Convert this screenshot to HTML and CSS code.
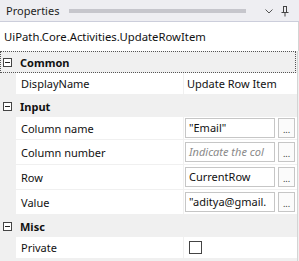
FILE: index.html
```html
<!DOCTYPE html>
<html lang="en">
<head>
  <meta charset="UTF-8">
  <title>Properties</title>
  <link rel="stylesheet" href="styles.css">
</head>
<body>
  <div class="panel">
    <header class="titlebar">
      <span class="title">Properties</span>
      <span class="grip"></span>
      <svg class="tb-icon" width="10" height="8" viewBox="0 0 10 8">
        <path d="M1.5 2.5 L5 6 L8.5 2.5" fill="none" stroke="#555" stroke-width="1"/>
      </svg>
      <svg class="tb-icon" width="10" height="12" viewBox="0 0 10 12">
        <path d="M3 1.5 H7 M3.5 1.5 V7 M6.5 1.5 V7 M1.5 7.5 H8.5 M5 7.5 V11.5" fill="none" stroke="#444" stroke-width="1"/>
      </svg>
    </header>

    <div class="objname">UiPath.Core.Activities.UpdateRowItem</div>

    <div class="grid">
      <div class="cat focus"><span class="toggle"></span>Common</div>
      <div class="prop">
        <div class="name">DisplayName</div>
        <div class="value">Update Row Item</div>
      </div>

      <div class="cat"><span class="toggle"></span>Input</div>
      <div class="prop tall first">
        <div class="name">Column name</div>
        <div class="value"><span class="box">"Email"</span><span class="more">...</span></div>
      </div>
      <div class="prop tall">
        <div class="name">Column number</div>
        <div class="value"><span class="box hint">Indicate the col</span><span class="more">...</span></div>
      </div>
      <div class="prop tall">
        <div class="name">Row</div>
        <div class="value"><span class="box">CurrentRow</span><span class="more">...</span></div>
      </div>
      <div class="prop tall">
        <div class="name">Value</div>
        <div class="value"><span class="box">"aditya@gmail.</span><span class="more">...</span></div>
      </div>

      <div class="cat"><span class="toggle"></span>Misc</div>
      <div class="prop">
        <div class="name">Private</div>
        <div class="value"><span class="check"></span></div>
      </div>
    </div>
  </div>
</body>
</html>
```

FILE: styles.css
```css
* {
  margin: 0;
  padding: 0;
  box-sizing: border-box;
}

body {
  font-family: 'Noto Sans', 'Open Sans', Arial, sans-serif;
  font-size: 11px;
  color: #111;
  background-color: #f0f0f0;
  width: 299px;
  height: 261px;
  overflow: hidden;
}

.panel {
  display: flex;
  flex-direction: column;
  height: 261px;
}

/* Title bar */
.titlebar {
  display: flex;
  align-items: center;
  height: 22px;
  padding: 0 9px 0 6px;
  gap: 6px;
  background-color: #eeeef2;
  border-bottom: 1px solid #cccedb;
}

.titlebar .title {
  color: #1e1e1e;
}

.grip {
  flex: 1;
  height: 4px;
  margin: 0 12px 0 4px;
  background-image: radial-gradient(circle, #b0b0b8 0.6px, transparent 0.9px);
  background-size: 2px 2px;
}

.tb-icon {
  display: block;
}

/* Selected object name */
.objname {
  height: 29px;
  line-height: 29px;
  padding-left: 4px;
  font-size: 11.3px;
  background-color: #ffffff;
  border-right: 1px solid #d4d4d4;
}

/* Property grid */
.grid {
  flex: 1;
  background-color: #f0f0f0;
  border-right: 1px solid #d4d4d4;
  margin-right: 1px;
}

.cat {
  display: flex;
  align-items: center;
  height: 22px;
  padding-left: 3px;
  font-weight: bold;
  gap: 8px;
}

.cat.focus {
  outline: 1px dotted #555;
  outline-offset: -1px;
  margin: 0 1px 0 0;
}

.toggle {
  position: relative;
  width: 9px;
  height: 9px;
  border: 1px solid #444;
  background-color: #fff;
}

.toggle::after {
  content: '';
  position: absolute;
  left: 1px;
  top: 3px;
  width: 5px;
  height: 1px;
  background-color: #222;
}

.prop {
  display: flex;
  height: 22px;
  margin-left: 16px;
  border-bottom: 1px solid #f0f0f0;
  background-color: #fff;
}

.prop.tall {
  height: 25px;
}

.prop.first {
  height: 23px;
}

.name {
  width: 168px;
  padding-left: 5px;
  display: flex;
  align-items: center;
  border-right: 1px solid #f0f0f0;
}

.value {
  flex: 1;
  display: flex;
  align-items: center;
  gap: 3px;
  padding-left: 1px;
  min-width: 0;
}

.prop:not(.tall) .value {
  padding-left: 3px;
}

.box {
  width: 90px;
  height: 20px;
  line-height: 18px;
  padding-left: 3px;
  border: 1px solid #c6c6c6;
  background-color: #fff;
  white-space: nowrap;
  overflow: hidden;
}

.box.hint {
  font-style: italic;
  color: #8a8a8a;
}

.more {
  width: 17px;
  height: 20px;
  border: 1px solid #c6c6c6;
  background-color: #fbfbfb;
  font-size: 9px;
  line-height: 22px;
  text-align: center;
  color: #333;
}

.check {
  width: 13px;
  height: 13px;
  margin-left: 2px;
  border: 1px solid #444;
  background-color: #fff;
}
```
